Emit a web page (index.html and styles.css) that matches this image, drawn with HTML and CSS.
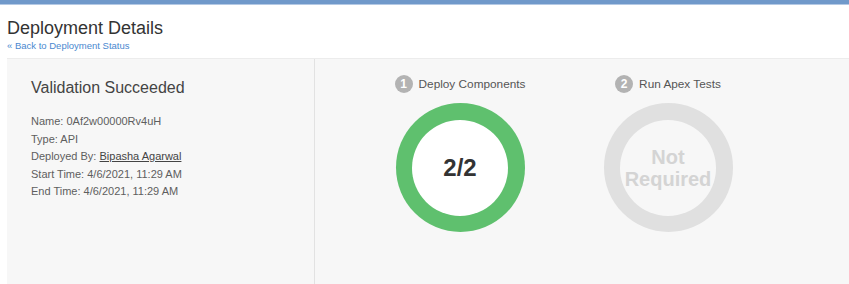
FILE: index.html
```html
<!DOCTYPE html>
<html>
<head>
<meta charset="utf-8">
<link rel="stylesheet" href="styles.css">
</head>
<body>
<div class="topbar"></div>
<div class="page">
  <h1 class="title">Deployment Details</h1>
  <a class="back" href="#">« Back to Deployment Status</a>
  <div class="panel">
    <div class="summary">
      <h2 class="status">Validation Succeeded</h2>
      <div class="line">Name: 0Af2w00000Rv4uH</div>
      <div class="line">Type: API</div>
      <div class="line">Deployed By: <a class="user" href="#">Bipasha Agarwal</a></div>
      <div class="line">Start Time: 4/6/2021, 11:29 AM</div>
      <div class="line">End Time: 4/6/2021, 11:29 AM</div>
    </div>
    <div class="steps">
      <div class="step">
        <div class="step-head"><span class="badge">1</span><span class="step-name">Deploy Components</span></div>
        <div class="donut done"><div class="donut-inner"><span class="count">2/2</span></div></div>
      </div>
      <div class="step">
        <div class="step-head"><span class="badge">2</span><span class="step-name">Run Apex Tests</span></div>
        <div class="donut skip"><div class="donut-inner"><span class="na">Not<br>Required</span></div></div>
      </div>
    </div>
  </div>
</div>
</body>
</html>
```
FILE: styles.css
```css
html, body {
  margin: 0;
  padding: 0;
  background: #ffffff;
  font-family: "Liberation Sans", Arial, sans-serif;
  overflow: hidden;
}
.topbar {
  height: 4px;
  background: #7099ca;
  border-bottom: 1px solid #b4c9e4;
}
.page {
  padding: 0 0 0 7px;
}
.title {
  margin: 0;
  padding-top: 11px;
  font-size: 18px;
  line-height: 24px;
  font-weight: normal;
  color: #333333;
}
.back {
  display: block;
  font-size: 9.5px;
  line-height: 12px;
  color: #4a88cf;
  text-decoration: none;
}
.panel {
  margin-top: 6px;
  display: flex;
  background: #f7f7f7;
  border-top: 1px solid #ececec;
  height: 230px;
}
.summary {
  width: 283px;
  padding: 18px 0 0 24px;
  border-right: 1px solid #e2e2e2;
}
.status {
  margin: 0 0 14px 0;
  font-size: 16px;
  line-height: 22px;
  font-weight: normal;
  color: #444444;
}
.line {
  font-size: 11px;
  line-height: 17.5px;
  color: #5e5e5e;
}
.user {
  color: #444444;
  text-decoration: underline;
}
.steps {
  display: flex;
  padding: 16px 0 0 41px;
}
.step {
  width: 208px;
  display: flex;
  flex-direction: column;
  align-items: center;
}
.step-head {
  display: flex;
  align-items: center;
  gap: 6px;
  height: 18px;
}
.badge {
  width: 18px;
  height: 18px;
  border-radius: 50%;
  background: #b3b3b3;
  color: #ffffff;
  font-size: 12px;
  font-weight: bold;
  display: flex;
  align-items: center;
  justify-content: center;
}
.step-name {
  font-size: 11.8px;
  color: #555555;
}
.donut {
  margin-top: 10px;
  width: 129px;
  height: 129px;
  border-radius: 50%;
  display: flex;
  align-items: center;
  justify-content: center;
}
.donut.done { background: #5fc06e; }
.donut.skip { background: #e0e0e0; }
.donut-inner {
  width: 96px;
  height: 96px;
  border-radius: 50%;
  display: flex;
  align-items: center;
  justify-content: center;
  text-align: center;
}
.done .donut-inner { background: #ffffff; }
.skip .donut-inner { background: #f7f7f7; }
.count {
  font-size: 24px;
  font-weight: bold;
  color: #333333;
}
.na {
  font-size: 20px;
  line-height: 22px;
  font-weight: bold;
  color: #d4d4d4;
}
```
